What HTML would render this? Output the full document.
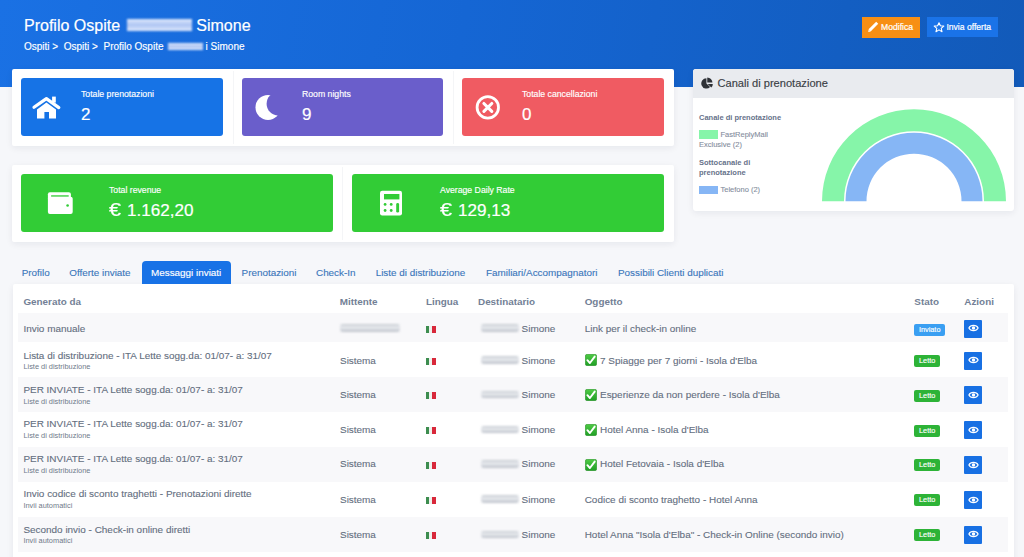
<!DOCTYPE html>
<html><head><meta charset="utf-8">
<style>
*{box-sizing:border-box;margin:0;padding:0}
html,body{width:1024px;height:557px;overflow:hidden}
body{background:#f6f7fa;font-family:"Liberation Sans",sans-serif;position:relative;color:#5d6878}
.abs{position:absolute}
#hdr{left:0;top:0;width:1024px;height:87px;background:linear-gradient(100deg,#1a71e4 0%,#1566d4 45%,#125ab9 100%)}
#title{left:24px;top:17px;font-size:16px;color:#fff;white-space:nowrap;-webkit-text-stroke:0.2px #fff}
#crumb{left:24px;top:41px;font-size:10px;color:#fff;white-space:nowrap;-webkit-text-stroke:0.15px #fff}
.blur{display:inline-block;background:rgba(255,255,255,.75);filter:blur(2px);border-radius:3px;vertical-align:middle}
.btn{height:21px;top:17px;color:#fff;font-size:8.7px;line-height:21px;padding-left:8px;white-space:nowrap}
#bmod{left:862px;width:58px;background:#f78f14}
#binv{left:927px;width:71px;background:#1a73e8;height:20px;line-height:20px}
.card{background:#fff;border-radius:2px;box-shadow:0 2px 7px rgba(20,30,50,.07)}
.stat{border-radius:3px;color:#fff}
.stat .lbl{position:absolute;font-size:8.7px;white-space:nowrap;-webkit-text-stroke:0.15px #fff}
.stat .val{position:absolute;font-size:17px;white-space:nowrap;-webkit-text-stroke:0.2px #fff}
.eur{display:inline-block;width:18px;transform:scaleX(1.2);transform-origin:left}
.stat svg{position:absolute}
.legh{font-size:7.5px;line-height:10px;font-weight:bold;color:#66728a;white-space:nowrap}
.legt{font-size:7.5px;line-height:10px;color:#848d9d;white-space:nowrap;-webkit-text-stroke:0.1px #848d9d}
.sw{width:18.5px;height:8.4px}
.tab{position:absolute;top:260.5px;height:23px;font-size:9.9px;line-height:24.4px;color:#3a76bb;-webkit-text-stroke:0.12px #3a76bb;white-space:nowrap}
.tab.act{background:#1872e6;color:#fff;-webkit-text-stroke:0.15px #fff;border-radius:4px 4px 0 0;padding:0 9px}
.th{position:absolute;top:296.3px;font-size:9.9px;font-weight:bold;color:#737f96;white-space:nowrap;line-height:11px}
.stripe{position:absolute;left:18px;width:990px;background:#f8f8fa}
.c{position:absolute;font-size:9.95px;color:#636e7e;-webkit-text-stroke:0.1px #636e7e;white-space:nowrap;line-height:11px}
.sub{position:absolute;font-size:7.4px;color:#6f7a8a;white-space:nowrap;line-height:9px}
.bl{position:absolute;background:linear-gradient(180deg,#c0c5cd 0,#e4e7eb 30%,#dfe2e7 60%,#b9bec8 100%);filter:blur(0.8px);border-radius:3px}
.flag{position:absolute;width:10.8px;height:7px;background:linear-gradient(90deg,#3d8d4f 0,#3d8d4f 34%,#eef2ee 34%,#eef2ee 59%,#d8283a 59%)}
.bdg{position:absolute;left:914.2px;height:12px;border-radius:2px;color:#fff;font-size:7.3px;line-height:12.4px;text-align:center;-webkit-text-stroke:0.15px #fff}
.eye{position:absolute;left:964.1px;width:18px;height:18px;background:#1870e3;border-radius:1px}
.eye svg{position:absolute;left:3.5px;top:4.8px}
.chk{position:absolute}
.btxt{color:#fff;font-size:8.6px;line-height:21px;white-space:nowrap;-webkit-text-stroke:0.2px #fff}
#title2{left:196.3px;top:17px;font-size:16px;color:#fff;white-space:nowrap;-webkit-text-stroke:0.2px #fff}
#crumb2{left:205.6px;top:41px;font-size:10px;color:#fff;white-space:nowrap;-webkit-text-stroke:0.15px #fff}
.blr{background:linear-gradient(180deg,rgba(235,240,255,.95) 0,rgba(200,212,245,.85) 50%,rgba(235,240,255,.95) 100%);filter:blur(1px)}
.dv{width:1px;background:#f4f5f7}
</style></head><body>
<div id="hdr" class="abs"></div>
<div id="title" class="abs">Profilo Ospite</div><div class="abs blr" style="left:126.5px;top:19px;width:65.5px;height:12.2px"></div><div id="title2" class="abs">Simone</div>
<div id="crumb" class="abs">Ospiti &gt;&nbsp; Ospiti &gt;&nbsp; Profilo Ospite</div><div class="abs blr" style="left:167.7px;top:42.5px;width:35.5px;height:7px"></div><div id="crumb2" class="abs">i Simone</div>
<div id="bmod" class="abs btn"></div><svg class="abs" style="left:866px;top:20px" width="14" height="14" viewBox="0 0 14 14"><path d="M3.6 10.4 L11.2 2.8" stroke="#fff" stroke-width="2.9" stroke-linecap="butt"/><path d="M2.2 11.9 L2.7 9.4 L4.7 11.4 Z" fill="#fff"/></svg><div class="abs btxt" style="left:881px;top:17px">Modifica</div>
<div id="binv" class="abs btn"></div><svg class="abs" style="left:932.5px;top:21.5px" width="12" height="11" viewBox="0.5 0.5 12 11"><path d="M6.5 1.2 L7.9 4.3 L11.3 4.6 L8.7 6.8 L9.5 10.2 L6.5 8.4 L3.5 10.2 L4.3 6.8 L1.7 4.6 L5.1 4.3 Z" fill="none" stroke="#fff" stroke-width="1.1" stroke-linejoin="round"/></svg><div class="abs btxt" style="left:946.4px;top:16.5px">Invia offerta</div>

<!-- stats card 1 -->
<div class="abs card" style="left:12px;top:69px;width:662px;height:77px"></div>
<div class="abs stat" style="left:21px;top:78px;width:202px;height:58px;background:#1673e6">
  <div class="lbl" style="left:60px;top:11px">Totale prenotazioni</div>
  <div class="val" style="left:60px;top:27px">2</div>
</div>
<div class="abs stat" style="left:242px;top:78px;width:201px;height:58px;background:#6a5ecb">
  <div class="lbl" style="left:60px;top:11px">Room nights</div>
  <div class="val" style="left:60px;top:27px">9</div>
</div>
<div class="abs stat" style="left:462px;top:78px;width:202px;height:58px;background:#f05b62">
  <div class="lbl" style="left:60px;top:11px">Totale cancellazioni</div>
  <div class="val" style="left:60px;top:27px">0</div>
</div>

<div class="abs dv" style="left:232.5px;top:71px;height:73px"></div><div class="abs dv" style="left:452.5px;top:71px;height:73px"></div>
<!-- stats card 2 -->
<div class="abs card" style="left:12px;top:165px;width:662px;height:77px"></div>
<div class="abs stat" style="left:21px;top:174px;width:312px;height:58px;background:#32cc36">
  <div class="lbl" style="left:88px;top:10.5px">Total revenue</div>
  <div class="val" style="left:88px;top:26px;font-size:18px"><span class="eur">€</span><span style="font-size:17.1px">1.162,20</span></div>
</div>
<div class="abs stat" style="left:352px;top:174px;width:312px;height:58px;background:#32cc36">
  <div class="lbl" style="left:88px;top:10.5px">Average Daily Rate</div>
  <div class="val" style="left:88px;top:26px;font-size:18px"><span class="eur">€</span><span style="font-size:17.1px">129,13</span></div>
</div>

<svg class="abs" style="left:28px;top:90px" width="36" height="32" viewBox="0 0 36 32"><polyline points="6,17.3 18.4,8.6 30.8,17.6" fill="none" stroke="#fff" stroke-width="3.2" stroke-linecap="round" stroke-linejoin="round"/><rect x="24.1" y="6.6" width="3.7" height="6" fill="#fff"/><polygon points="9,19.6 18.4,12.6 28,19.6 28,28.4 21,28.4 21,22.1 16.4,22.1 16.4,28.4 9,28.4" fill="#fff"/></svg><svg class="abs" style="left:250px;top:90px" width="36" height="32" viewBox="0 0 36 32"><defs><mask id="mm"><rect width="36" height="32" fill="#fff"/><circle cx="28.2" cy="13.8" r="11.6" fill="#000"/></mask></defs><circle cx="18" cy="17.4" r="12.5" fill="#fff" mask="url(#mm)"/></svg><svg class="abs" style="left:470px;top:90px" width="36" height="32" viewBox="0 0 36 32"><circle cx="17.8" cy="17.4" r="10.7" fill="none" stroke="#fff" stroke-width="2.8"/><path d="M13.9 13.5 L21.8 21.4 M21.8 13.5 L13.9 21.4" stroke="#fff" stroke-width="3.1" stroke-linecap="round"/></svg><svg class="abs" style="left:40px;top:185px" width="40" height="40" viewBox="0 0 40 40"><rect x="7.9" y="7.2" width="23" height="8" rx="2" fill="#fff"/><rect x="7.9" y="11.8" width="24.8" height="17.3" rx="2" fill="#fff"/><rect x="11.1" y="10.3" width="17.6" height="1.3" fill="#32cc36"/><circle cx="27.6" cy="20.5" r="1.3" fill="#32cc36"/></svg><svg class="abs" style="left:370px;top:185px" width="40" height="40" viewBox="0 0 40 40"><rect x="10" y="5.7" width="22" height="24.8" rx="2.2" fill="#fff"/><rect x="14" y="9" width="15.4" height="5.4" fill="#32cc36"/><circle cx="15.1" cy="19.4" r="1.4" fill="#32cc36"/><circle cx="21.2" cy="19.4" r="1.4" fill="#32cc36"/><circle cx="15.1" cy="25.5" r="1.4" fill="#32cc36"/><circle cx="21.2" cy="25.5" r="1.4" fill="#32cc36"/><rect x="26.2" y="18" width="2.9" height="9.6" rx="1.4" fill="#32cc36"/></svg>
<div class="abs dv" style="left:342.3px;top:167px;height:73px"></div>
<!-- canali -->
<div class="abs card" style="left:693px;top:69px;width:321px;height:142px;border-radius:3px;overflow:hidden">
  <div style="height:29px;background:#e9ebef"></div>
</div>
<div class="abs" style="left:717.5px;top:77px;font-size:11.1px;color:#3a3e45;white-space:nowrap;-webkit-text-stroke:0.15px #3a3e45">Canali di prenotazione</div>

<svg class="abs" style="left:700.1px;top:77.4px" width="12.9" height="12.9" viewBox="0 0 14 14"><path d="M7 7 L7 1.4 A5.6 5.6 0 1 0 10.96 10.96 Z" fill="#2e3136"/><path d="M7.9 6.1 L7.9 0.5 A5.6 5.6 0 0 1 13.5 6.1 Z" fill="#2e3136"/><path d="M8.3 7.5 L13.9 7.5 A5.6 5.6 0 0 1 12.26 11.46 Z" fill="#2e3136"/></svg>
<div class="abs legh" style="left:699px;top:113px">Canale di prenotazione</div>
<div class="abs sw" style="left:699px;top:130.3px;background:#86f5a9"></div>
<div class="abs legt" style="left:720.5px;top:129.5px">FastReplyMail</div>
<div class="abs legt" style="left:699px;top:139.7px">Exclusive (2)</div>
<div class="abs legh" style="left:699px;top:157.6px">Sottocanale di</div>
<div class="abs legh" style="left:699px;top:168.2px">prenotazione</div>
<div class="abs sw" style="left:699px;top:186px;background:#86b6f5"></div>
<div class="abs legt" style="left:720.5px;top:185.3px">Telefono (2)</div>
<svg class="abs" style="left:814px;top:100.4px" width="200" height="110" viewBox="0 0 200 110">
<path d="M8 101.2 A92 92 0 0 1 192 101.2 L170 101.2 A70 70 0 0 0 30 101.2 Z" fill="#86f5a9"/>
<path d="M31.5 101.2 A68.5 68.5 0 0 1 168.5 101.2 L147.5 101.2 A47.5 47.5 0 0 0 52.5 101.2 Z" fill="#86b6f5"/>
</svg>
<div class="abs card" style="left:12.5px;top:284px;width:1001.5px;height:300px"></div>
<div class="tab" style="left:21.7px">Profilo</div>
<div class="tab" style="left:69.3px">Offerte inviate</div>
<div class="tab" style="left:241.6px">Prenotazioni</div>
<div class="tab" style="left:316px">Check-In</div>
<div class="tab" style="left:375.7px">Liste di distribuzione</div>
<div class="tab" style="left:486px">Familiari/Accompagnatori</div>
<div class="tab" style="left:618px">Possibili Clienti duplicati</div>
<div class="tab act" style="left:142px;width:89px">Messaggi inviati</div>
<div class="th" style="left:23.4px">Generato da</div>
<div class="th" style="left:339.7px">Mittente</div>
<div class="th" style="left:426px">Lingua</div>
<div class="th" style="left:478px">Destinatario</div>
<div class="th" style="left:584.7px">Oggetto</div>
<div class="th" style="left:914.3px">Stato</div>
<div class="th" style="left:964.3px">Azioni</div>
<!--ROWS-->
<svg width="0" height="0" style="position:absolute"><defs><linearGradient id="gg" x1="0" y1="0" x2="0" y2="1"><stop offset="0" stop-color="#4fcb45"/><stop offset="1" stop-color="#1f9e25"/></linearGradient></defs></svg>
<div class="stripe" style="top:313.2px;height:29.2px"></div>
<div class="c" style="left:23.4px;top:323.3px">Invio manuale</div>
<div class="bl" style="left:340px;top:324.0px;width:60px;height:7.5px"></div>
<div class="flag" style="left:425.5px;top:325.5px"></div>
<div class="bl" style="left:480.5px;top:324.0px;width:38px;height:7.5px"></div>
<div class="c" style="left:521.6px;top:323.3px">Simone</div>
<div class="c" style="left:584.7px;top:323.3px">Link per il check-in online</div>
<div class="bdg" style="top:323.7px;width:31px;background:#3a9ff2">Inviato</div>
<div class="eye" style="top:319.7px"><svg width="11" height="8" viewBox="0 0 11 8"><path d="M0.9 4 C2.6 0.6 8.4 0.6 10.1 4 C8.4 7.4 2.6 7.4 0.9 4 Z" fill="none" stroke="#fff" stroke-width="1.2"/><circle cx="5.5" cy="4" r="1.7" fill="#fff"/></svg></div>
<div class="c" style="left:23.4px;top:349.5px">Lista di distribuzione - ITA Lette sogg.da: 01/07- a: 31/07</div>
<div class="sub" style="left:23.4px;top:362.4px">Liste di distribuzione</div>
<div class="c" style="left:340px;top:355.1px">Sistema</div>
<div class="flag" style="left:425.5px;top:357.5px"></div>
<div class="bl" style="left:480.5px;top:356.0px;width:38px;height:7.5px"></div>
<div class="c" style="left:521.6px;top:355.1px">Simone</div>
<div class="chk" style="left:585px;top:352.3px"><svg width="12" height="12" viewBox="0 0 12 12"><rect x="0.3" y="0.3" width="11.4" height="11.4" rx="2" fill="url(#gg)" stroke="#2a8f2a" stroke-width="0.6"/><path d="M2.4 6.2 L4.9 9 L9.7 2.6" fill="none" stroke="#fff" stroke-width="1.9" stroke-linecap="round" stroke-linejoin="round"/></svg></div>
<div class="c" style="left:600px;top:355.1px">7 Spiagge per 7 giorni - Isola d'Elba</div>
<div class="bdg" style="top:354.9px;width:26px;background:#2db337">Letto</div>
<div class="eye" style="top:351.7px"><svg width="11" height="8" viewBox="0 0 11 8"><path d="M0.9 4 C2.6 0.6 8.4 0.6 10.1 4 C8.4 7.4 2.6 7.4 0.9 4 Z" fill="none" stroke="#fff" stroke-width="1.2"/><circle cx="5.5" cy="4" r="1.7" fill="#fff"/></svg></div>
<div class="stripe" style="top:377.3px;height:34.8px"></div>
<div class="c" style="left:23.4px;top:383.8px">PER INVIATE - ITA Lette sogg.da: 01/07- a: 31/07</div>
<div class="sub" style="left:23.4px;top:396.7px">Liste di distribuzione</div>
<div class="c" style="left:340px;top:389.4px">Sistema</div>
<div class="flag" style="left:425.5px;top:392.4px"></div>
<div class="bl" style="left:480.5px;top:390.9px;width:38px;height:7.5px"></div>
<div class="c" style="left:521.6px;top:389.4px">Simone</div>
<div class="chk" style="left:585px;top:387.2px"><svg width="12" height="12" viewBox="0 0 12 12"><rect x="0.3" y="0.3" width="11.4" height="11.4" rx="2" fill="url(#gg)" stroke="#2a8f2a" stroke-width="0.6"/><path d="M2.4 6.2 L4.9 9 L9.7 2.6" fill="none" stroke="#fff" stroke-width="1.9" stroke-linecap="round" stroke-linejoin="round"/></svg></div>
<div class="c" style="left:600px;top:389.4px">Esperienze da non perdere - Isola d'Elba</div>
<div class="bdg" style="top:389.8px;width:26px;background:#2db337">Letto</div>
<div class="eye" style="top:386.3px"><svg width="11" height="8" viewBox="0 0 11 8"><path d="M0.9 4 C2.6 0.6 8.4 0.6 10.1 4 C8.4 7.4 2.6 7.4 0.9 4 Z" fill="none" stroke="#fff" stroke-width="1.2"/><circle cx="5.5" cy="4" r="1.7" fill="#fff"/></svg></div>
<div class="c" style="left:23.4px;top:418.2px">PER INVIATE - ITA Lette sogg.da: 01/07- a: 31/07</div>
<div class="sub" style="left:23.4px;top:431.2px">Liste di distribuzione</div>
<div class="c" style="left:340px;top:423.9px">Sistema</div>
<div class="flag" style="left:425.5px;top:427.2px"></div>
<div class="bl" style="left:480.5px;top:425.7px;width:38px;height:7.5px"></div>
<div class="c" style="left:521.6px;top:423.9px">Simone</div>
<div class="chk" style="left:585px;top:422.0px"><svg width="12" height="12" viewBox="0 0 12 12"><rect x="0.3" y="0.3" width="11.4" height="11.4" rx="2" fill="url(#gg)" stroke="#2a8f2a" stroke-width="0.6"/><path d="M2.4 6.2 L4.9 9 L9.7 2.6" fill="none" stroke="#fff" stroke-width="1.9" stroke-linecap="round" stroke-linejoin="round"/></svg></div>
<div class="c" style="left:600px;top:423.9px">Hotel Anna - Isola d'Elba</div>
<div class="bdg" style="top:424.6px;width:26px;background:#2db337">Letto</div>
<div class="eye" style="top:421.1px"><svg width="11" height="8" viewBox="0 0 11 8"><path d="M0.9 4 C2.6 0.6 8.4 0.6 10.1 4 C8.4 7.4 2.6 7.4 0.9 4 Z" fill="none" stroke="#fff" stroke-width="1.2"/><circle cx="5.5" cy="4" r="1.7" fill="#fff"/></svg></div>
<div class="stripe" style="top:446.8px;height:34.8px"></div>
<div class="c" style="left:23.4px;top:452.7px">PER INVIATE - ITA Lette sogg.da: 01/07- a: 31/07</div>
<div class="sub" style="left:23.4px;top:465.6px">Liste di distribuzione</div>
<div class="c" style="left:340px;top:458.3px">Sistema</div>
<div class="flag" style="left:425.5px;top:461.9px"></div>
<div class="bl" style="left:480.5px;top:460.4px;width:38px;height:7.5px"></div>
<div class="c" style="left:521.6px;top:458.3px">Simone</div>
<div class="chk" style="left:585px;top:456.7px"><svg width="12" height="12" viewBox="0 0 12 12"><rect x="0.3" y="0.3" width="11.4" height="11.4" rx="2" fill="url(#gg)" stroke="#2a8f2a" stroke-width="0.6"/><path d="M2.4 6.2 L4.9 9 L9.7 2.6" fill="none" stroke="#fff" stroke-width="1.9" stroke-linecap="round" stroke-linejoin="round"/></svg></div>
<div class="c" style="left:600px;top:458.3px">Hotel Fetovaia - Isola d'Elba</div>
<div class="bdg" style="top:459.3px;width:26px;background:#2db337">Letto</div>
<div class="eye" style="top:455.8px"><svg width="11" height="8" viewBox="0 0 11 8"><path d="M0.9 4 C2.6 0.6 8.4 0.6 10.1 4 C8.4 7.4 2.6 7.4 0.9 4 Z" fill="none" stroke="#fff" stroke-width="1.2"/><circle cx="5.5" cy="4" r="1.7" fill="#fff"/></svg></div>
<div class="c" style="left:23.4px;top:488.4px">Invio codice di sconto traghetti - Prenotazioni dirette</div>
<div class="sub" style="left:23.4px;top:501.3px">Invii automatici</div>
<div class="c" style="left:340px;top:494.0px">Sistema</div>
<div class="flag" style="left:425.5px;top:496.9px"></div>
<div class="bl" style="left:480.5px;top:495.4px;width:38px;height:7.5px"></div>
<div class="c" style="left:521.6px;top:494.0px">Simone</div>
<div class="c" style="left:584.7px;top:494.0px">Codice di sconto traghetto - Hotel Anna</div>
<div class="bdg" style="top:493.8px;width:26px;background:#2db337">Letto</div>
<div class="eye" style="top:490.8px"><svg width="11" height="8" viewBox="0 0 11 8"><path d="M0.9 4 C2.6 0.6 8.4 0.6 10.1 4 C8.4 7.4 2.6 7.4 0.9 4 Z" fill="none" stroke="#fff" stroke-width="1.2"/><circle cx="5.5" cy="4" r="1.7" fill="#fff"/></svg></div>
<div class="stripe" style="top:516.8px;height:35.2px"></div>
<div class="c" style="left:23.4px;top:523.5px">Secondo invio - Check-in online diretti</div>
<div class="sub" style="left:23.4px;top:536.4px">Invii automatici</div>
<div class="c" style="left:340px;top:529.1px">Sistema</div>
<div class="flag" style="left:425.5px;top:532.1px"></div>
<div class="bl" style="left:480.5px;top:530.6px;width:38px;height:7.5px"></div>
<div class="c" style="left:521.6px;top:529.1px">Simone</div>
<div class="c" style="left:584.7px;top:529.1px">Hotel Anna "Isola d'Elba" - Check-in Online (secondo invio)</div>
<div class="bdg" style="top:529.0px;width:26px;background:#2db337">Letto</div>
<div class="eye" style="top:525.6px"><svg width="11" height="8" viewBox="0 0 11 8"><path d="M0.9 4 C2.6 0.6 8.4 0.6 10.1 4 C8.4 7.4 2.6 7.4 0.9 4 Z" fill="none" stroke="#fff" stroke-width="1.2"/><circle cx="5.5" cy="4" r="1.7" fill="#fff"/></svg></div>
<!--/ROWS-->
</body></html>
